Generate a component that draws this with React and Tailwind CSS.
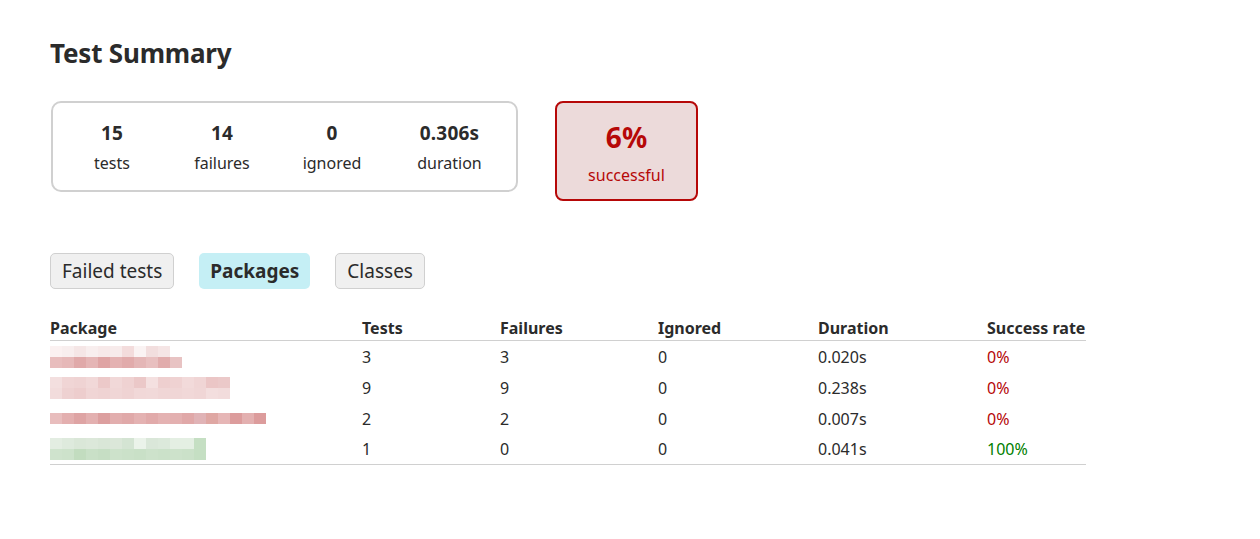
import React from 'react';

const font = { fontFamily: '"Noto Sans", "Open Sans", sans-serif' };

const summary = [
  { value: '15', label: 'tests', width: 'w-[110px]' },
  { value: '14', label: 'failures', width: 'w-[110px]' },
  { value: '0', label: 'ignored', width: 'w-[110px]' },
  { value: '0.306s', label: 'duration', width: 'w-[125px]' },
];

const packages = [
  {
    tests: 3, failures: 3, ignored: 0, duration: '0.020s', rate: '0%', ok: false,
    top: ['#fbf1f1', '#f8eeee', '#f5e6e6', '#f8eeee', '#f7e9e9', '#f7ebeb', '#f3dcdc', '#faf3f3', '#f2dede', '#f5e5e5'],
    bottom: ['#e8bdbd', '#e6b8b8', '#e0a9a9', '#e5b5b5', '#dfa4a4', '#e4b2b2', '#e1abab', '#e4b6b6', '#e8bfbf', '#e1acac', '#e8c3c3'],
  },
  {
    tests: 9, failures: 9, ignored: 0, duration: '0.238s', rate: '0%', ok: false,
    top: ['#f3dfdf', '#f0d5d5', '#efd3d3', '#f1d8d8', '#ecc9c9', '#f1d8d8', '#efd2d2', '#ebc8c8', '#f4e0e0', '#eecfcf', '#efd2d2', '#f2dada', '#f0d5d5', '#ebc6c6', '#ebc9c9'],
    bottom: ['#f2dcdc', '#eed1d1', '#edcdcd', '#f0d5d5', '#efd3d3', '#f0d6d6', '#efd3d3', '#f1d8d8', '#f1d9d9', '#f0d6d6', '#f0d6d6', '#f1d8d8', '#f0d6d6', '#f3dede', '#f2dcdc'],
  },
  {
    tests: 2, failures: 2, ignored: 0, duration: '0.007s', rate: '0%', ok: false,
    top: ['#e8bdbd', '#e3afaf', '#dea4a4', '#e3b0b0', '#dc9f9f', '#e2aeae', '#e0a9a9', '#e4b2b2', '#e1aaaa', '#e4b2b2', '#e3b0b0', '#e0a8a8', '#e0b3b6', '#dfa7a3', '#e6b6b6', '#dc9c9c', '#e3b0b0', '#dc9c9c'],
    bottom: [],
  },
  {
    tests: 1, failures: 0, ignored: 0, duration: '0.041s', rate: '100%', ok: true,
    top: ['#e3ede2', '#deeadd', '#dae7d8', '#dce8da', '#d9e6d7', '#dbe7d9', '#d4e4d3', '#ebf3ea', '#dae7d9', '#dce9db', '#e4efe3', '#e4efe3', '#c5dfc3'],
    bottom: ['#cfe3cd', '#cde2cb', '#c2dcbf', '#c9e0c7', '#c6dec4', '#cde2cb', '#cbe1c9', '#c9e0c7', '#cde2cb', '#cbe1c9', '#cde2cb', '#cbe1c9', '#c5dfc3'],
  },
];

const Mosaic = ({ top, bottom }) => (
  <div className="flex flex-col">
    <div className="flex">
      {top.map((c, i) => (
        <div key={i} className="w-3 h-[11px]" style={{ backgroundColor: c }} />
      ))}
    </div>
    {bottom.length > 0 && (
      <div className="flex">
        {bottom.map((c, i) => (
          <div key={i} className="w-3 h-[11px]" style={{ backgroundColor: c }} />
        ))}
      </div>
    )}
  </div>
);

const App = () => {
  return (
    <div className="min-h-screen bg-white text-[#2b2b2b] pl-[50px] pt-[33px]" style={font}>
      <h1 className="text-[26px] font-bold leading-[40px] tracking-[-0.2px]">Test Summary</h1>

      <div className="flex items-start gap-[37px] mt-[28px]">
        <div className="flex border-2 border-[#d0d0d0] rounded-[10px] px-[4px] ml-px">
          {summary.map((s) => (
            <div key={s.label} className={`${s.width} flex flex-col items-center pt-[16px] pb-[15px]`}>
              <div className="text-[19px] font-bold leading-[28px] tracking-[0.2px]">{s.value}</div>
              <div className="text-[16px] leading-[24px] mt-[4px]">{s.label}</div>
            </div>
          ))}
        </div>
        <div className="w-[143px] h-[100px] border-2 border-[#b60808] bg-[#ecdada] rounded-[8px] flex flex-col items-center text-[#b60808] pt-[15px]">
          <div className="text-[28px] font-bold leading-[38px]">6%</div>
          <div className="text-[16px] leading-[24px] mt-[7px]">successful</div>
        </div>
      </div>

      <div className="flex gap-[25px] mt-[52px]">
        <div className="h-[36px] px-[11px] flex items-center bg-[#f0f0f0] border border-[#d0d0d0] rounded-[5px] text-[19px]">Failed tests</div>
        <div className="h-[36px] px-[11px] flex items-center bg-[#c5eff5] rounded-[5px] text-[19px] font-bold">Packages</div>
        <div className="h-[36px] px-[11px] flex items-center bg-[#f0f0f0] border border-[#d0d0d0] rounded-[5px] text-[19px]">Classes</div>
      </div>

      <table className="mt-[28px] w-[1036px] text-[16px] border-collapse">
        <thead>
          <tr className="border-b border-[#d0d0d0] text-left">
            <th className="w-[312px] font-bold leading-[23px] p-0">Package</th>
            <th className="w-[138px] font-bold leading-[23px] p-0">Tests</th>
            <th className="w-[158px] font-bold leading-[23px] p-0">Failures</th>
            <th className="w-[160px] font-bold leading-[23px] p-0">Ignored</th>
            <th className="w-[169px] font-bold leading-[23px] p-0">Duration</th>
            <th className="font-bold leading-[23px] p-0">Success rate</th>
          </tr>
        </thead>
        <tbody>
          {packages.map((p, i) => (
            <tr key={i} className={i === packages.length - 1 ? 'border-b border-[#d0d0d0]' : ''}>
              <td className="h-[31px] p-0 pt-[1px] align-middle">
                <Mosaic top={p.top} bottom={p.bottom} />
              </td>
              <td className="p-0 pt-[1px]">{p.tests}</td>
              <td className="p-0 pt-[1px]">{p.failures}</td>
              <td className="p-0 pt-[1px]">{p.ignored}</td>
              <td className="p-0 pt-[1px]">{p.duration}</td>
              <td className={`p-0 pt-[1px] ${p.ok ? 'text-[#008000]' : 'text-[#b60808]'}`}>{p.rate}</td>
            </tr>
          ))}
        </tbody>
      </table>
    </div>
  );
};

export default App;
